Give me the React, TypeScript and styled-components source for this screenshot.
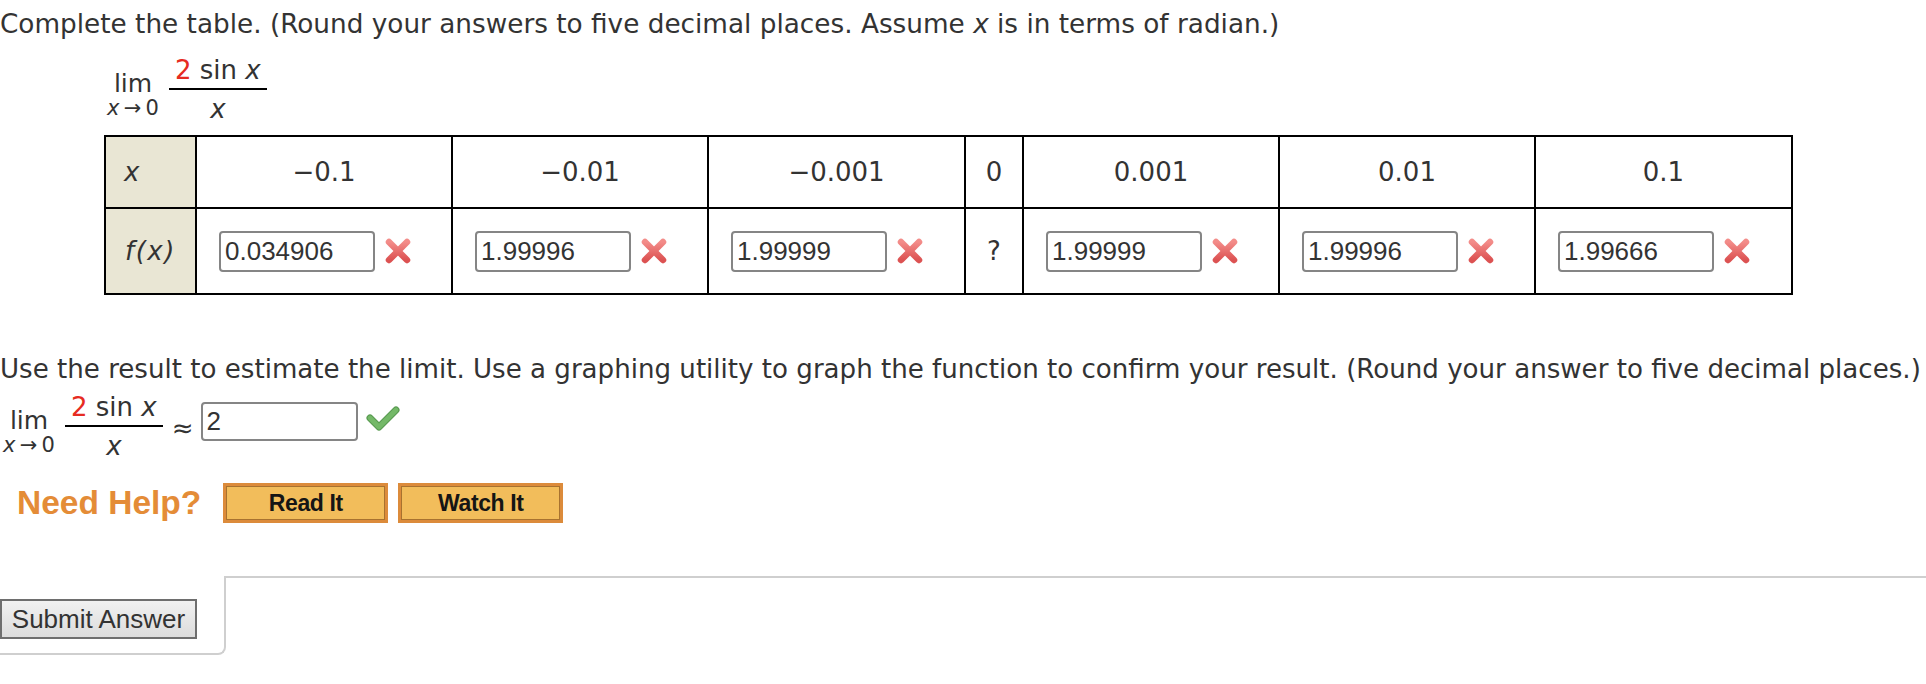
import React from 'react';
import styled, { createGlobalStyle } from 'styled-components';

const GlobalStyle = createGlobalStyle`
  html, body {
    margin: 0;
    padding: 0;
    background: #fff;
    overflow: hidden;
  }
  body {
    font-family: "DejaVu Sans", Verdana, sans-serif;
  }
`;

const Page = styled.div`
  width: 1926px;
  font-family: "DejaVu Sans", Verdana, sans-serif;
  font-size: 26px;
  color: #333;
`;

const Prompt = styled.p<{ $top: number; $size: number }>`
  margin: ${(p) => p.$top}px 0 0;
  font-size: ${(p) => p.$size}px;
  line-height: 37px;
  white-space: nowrap;
`;

const Var = styled.i`
  font-style: italic;
`;

const Red = styled.span`
  color: #e62b22;
`;

/* limit expression */
const Limit = styled.div<{ $indent: number; $top: number }>`
  display: inline-flex;
  align-items: flex-start;
  gap: 7px;
  margin: ${(p) => p.$top}px 0 0 ${(p) => p.$indent}px;
`;

const LimCol = styled.div`
  display: flex;
  flex-direction: column;
  align-items: center;
  padding-top: 16px;
  width: 58px;
`;

const LimWord = styled.span`
  line-height: 26px;
  font-size: 25px;
`;

const LimSub = styled.span`
  line-height: 22px;
  font-size: 21px;
  white-space: nowrap;
`;

const Frac = styled.div`
  display: flex;
  flex-direction: column;
  align-items: stretch;
`;

const Num = styled.span`
  line-height: 30px;
  padding: 0 6px 3px;
  border-bottom: 2px solid #000;
  text-align: center;
  white-space: nowrap;
`;

const Den = styled.span`
  line-height: 30px;
  padding-top: 4px;
  text-align: center;
`;

const Fraction = ({ indent, top }: { indent: number; top: number }) => (
  <Limit $indent={indent} $top={top}>
    <LimCol>
      <LimWord>lim</LimWord>
      <LimSub>
        <Var>x</Var>
        {'\u2009→\u20090'}
      </LimSub>
    </LimCol>
    <Frac>
      <Num>
        <Red>2</Red> sin <Var>x</Var>
      </Num>
      <Den>
        <Var>x</Var>
      </Den>
    </Frac>
  </Limit>
);

/* table */
const ValueTable = styled.table`
  border-collapse: collapse;
  table-layout: fixed;
  margin: 11px 0 0 104px;
`;

const Col = styled.col<{ $w: number }>`
  width: ${(p) => p.$w}px;
`;

const HeadRow = styled.tr`
  height: 72px;
`;

const FxRow = styled.tr`
  height: 86px;
`;

const LabelCell = styled.td<{ $pad: number; $spacing?: number }>`
  border: 2px solid #000;
  background: #e9e6d4;
  padding: 0 0 0 ${(p) => p.$pad}px;
  font-style: italic;
  letter-spacing: ${(p) => p.$spacing ?? 0}px;
  vertical-align: middle;
`;

const ValueCell = styled.td`
  border: 2px solid #000;
  padding: 0;
  text-align: center;
  vertical-align: middle;
  white-space: nowrap;
`;

const AnswerCell = styled.td`
  border: 2px solid #000;
  padding: 0 0 0 22px;
  vertical-align: middle;
`;

const AnswerWrap = styled.div`
  display: flex;
  align-items: center;
  gap: 9px;
`;

const AnswerBox = styled.input`
  box-sizing: border-box;
  width: 156px;
  height: 41px;
  margin: 0;
  padding: 0 4px;
  border: 2px solid #858585;
  border-radius: 4px;
  background: #fff;
  font-family: "Liberation Sans", Arial, sans-serif;
  font-size: 26px;
  color: #333;
  outline: none;
`;

const WrongMark = () => (
  <svg width="28" height="28" viewBox="0 0 28 28">
    <defs>
      <linearGradient id="wrongGrad" x1="0" y1="0" x2="0" y2="1">
        <stop offset="0" stopColor="#f38c89" />
        <stop offset="1" stopColor="#dc5252" />
      </linearGradient>
    </defs>
    <path
      d="M5 5 L23 23 M23 5 L5 23"
      stroke="url(#wrongGrad)"
      strokeWidth="6.5"
      strokeLinecap="round"
      fill="none"
    />
  </svg>
);

const RightMark = () => (
  <svg width="34" height="28" viewBox="0 0 34 28">
    <path
      d="M4 14 L13 23 L30 6"
      fill="none"
      stroke="#5a9c52"
      strokeWidth="7"
      strokeLinecap="round"
      strokeLinejoin="round"
    />
    <path
      d="M4 14 L13 23 L30 6"
      fill="none"
      stroke="#74b968"
      strokeWidth="4.6"
      strokeLinecap="round"
      strokeLinejoin="round"
    />
  </svg>
);

const xs = ['−0.1', '−0.01', '−0.001', '0', '0.001', '0.01', '0.1'];
const answers: (string | null)[] = [
  '0.034906',
  '1.99996',
  '1.99999',
  null,
  '1.99999',
  '1.99996',
  '1.99666',
];

/* estimate row */
const EstimateRow = styled.div`
  display: flex;
  align-items: flex-start;
  margin-top: 4px;
`;

const Approx = styled.span`
  margin: 23px 7px 0 9px;
  line-height: 26px;
`;

const EstimateBox = styled(AnswerBox)`
  margin-top: 10px;
  width: 157px;
  height: 39px;
`;

const CheckSlot = styled.span`
  margin: 12px 0 0 8px;
`;

/* help row */
const HelpRow = styled.div`
  display: flex;
  align-items: center;
  gap: 10px;
  margin-top: 22px;
  padding-left: 17px;
`;

const HelpLabel = styled.span`
  font-family: "Liberation Sans", Arial, sans-serif;
  font-weight: bold;
  font-size: 33.5px;
  color: #e48c37;
  margin-right: 12px;
`;

const HelpButton = styled.button`
  box-sizing: border-box;
  width: 165px;
  height: 40px;
  border: 3px solid #dc8b3b;
  box-shadow: inset 0 0 0 1px #a8722f;
  background: #f2bd5b;
  font-family: "Liberation Sans", Arial, sans-serif;
  font-weight: bold;
  font-size: 23px;
  letter-spacing: -0.4px;
  color: #151515;
  padding: 0;
`;

/* footer */
const Footer = styled.div`
  display: flex;
  margin-top: 53px;
`;

const SubmitPanel = styled.div`
  box-sizing: border-box;
  width: 226px;
  padding: 23px 0 14px;
  border-right: 2px solid #cfcfcf;
  border-bottom: 2px solid #cfcfcf;
  border-bottom-right-radius: 8px;
`;

const SubmitButton = styled.button`
  box-sizing: border-box;
  width: 197px;
  height: 40px;
  padding: 0;
  border: 2px solid #6e6e6e;
  background: linear-gradient(#f1f1f1, #dcdcdc);
  font-family: "Liberation Sans", Arial, sans-serif;
  font-size: 26px;
  color: #333;
`;

const FooterRest = styled.div`
  flex: 1;
  border-top: 2px solid #cfcfcf;
`;

export default function App() {
  return (
    <Page>
      <GlobalStyle />
      <Prompt $top={6} $size={26.3}>
        Complete the table. (Round your answers to five decimal places. Assume <Var>x</Var> is in
        terms of radian.)
      </Prompt>

      <Fraction indent={104} top={12} />

      <ValueTable>
        <colgroup>
          <Col $w={91} />
          <Col $w={256} />
          <Col $w={256} />
          <Col $w={257} />
          <Col $w={58} />
          <Col $w={256} />
          <Col $w={256} />
          <Col $w={257} />
        </colgroup>
        <tbody>
          <HeadRow>
            <LabelCell $pad={18}>x</LabelCell>
            {xs.map((v) => (
              <ValueCell key={v}>{v}</ValueCell>
            ))}
          </HeadRow>
          <FxRow>
            <LabelCell $pad={19} $spacing={1.5}>
              f(x)
            </LabelCell>
            {answers.map((a, i) =>
              a === null ? (
                <ValueCell key={i}>?</ValueCell>
              ) : (
                <AnswerCell key={i}>
                  <AnswerWrap>
                    <AnswerBox readOnly value={a} />
                    <WrongMark />
                  </AnswerWrap>
                </AnswerCell>
              )
            )}
          </FxRow>
        </tbody>
      </ValueTable>

      <Prompt $top={56} $size={26.1}>
        Use the result to estimate the limit. Use a graphing utility to graph the function to
        confirm your result. (Round your answer to five decimal places.)
      </Prompt>

      <EstimateRow>
        <Fraction indent={0} top={0} />
        <Approx>≈</Approx>
        <EstimateBox readOnly value="2" />
        <CheckSlot>
          <RightMark />
        </CheckSlot>
      </EstimateRow>

      <HelpRow>
        <HelpLabel>Need Help?</HelpLabel>
        <HelpButton>Read It</HelpButton>
        <HelpButton>Watch It</HelpButton>
      </HelpRow>

      <Footer>
        <SubmitPanel>
          <SubmitButton>Submit Answer</SubmitButton>
        </SubmitPanel>
        <FooterRest />
      </Footer>
    </Page>
  );
}
